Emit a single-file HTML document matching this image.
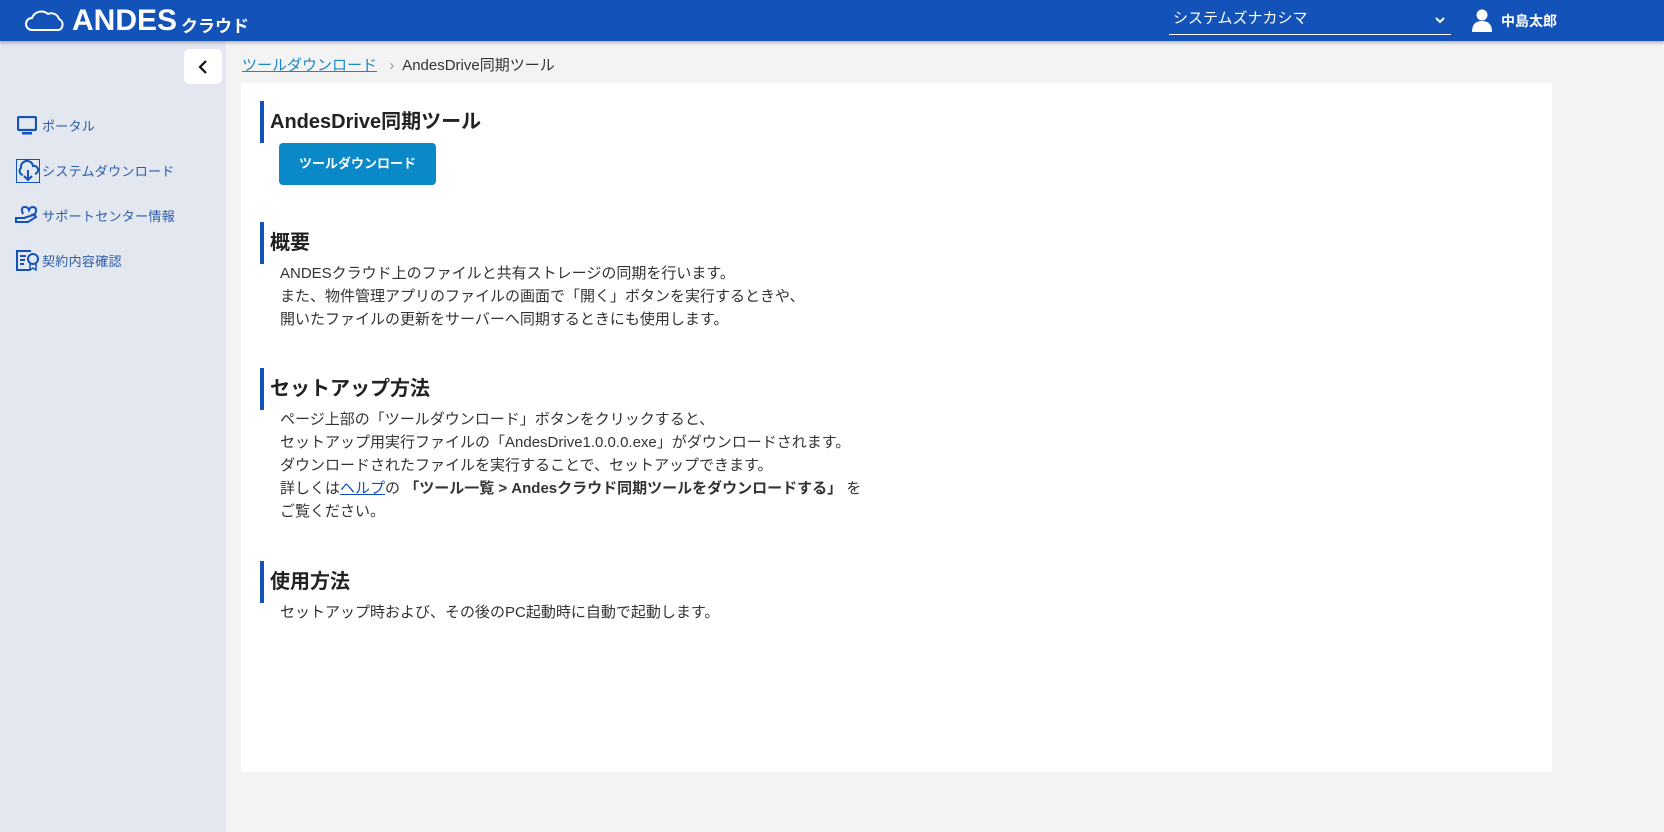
<!DOCTYPE html>
<html><head><meta charset="utf-8"><style>
*{margin:0;padding:0;box-sizing:border-box}
body{width:1664px;height:832px;overflow:hidden;font-family:"Liberation Sans","Noto Sans CJK JP",sans-serif;background:#f3f3f3;position:relative;color:#222}
.hdr{position:absolute;left:0;top:0;width:1664px;height:41px;background:#1352b8;box-shadow:0 2px 3px rgba(0,0,0,.25);z-index:2}
.logo{position:absolute;left:72px;top:4px;color:#fff;font-size:30px;font-weight:bold;letter-spacing:0px}
.logo2{position:absolute;left:181px;top:12px;color:#fff;font-size:17px;font-weight:bold}
.sel{position:absolute;left:1169px;top:8px;width:282px;height:27px;border-bottom:1px solid #fff;color:#fff;font-size:15px;padding-left:4px;line-height:22px}
.user{position:absolute;left:1501px;top:11px;color:#fff;font-size:14px;font-weight:bold}
.side{position:absolute;left:0;top:41px;width:226px;height:791px;background:#e3e7f0}
.tog{position:absolute;left:184px;top:49px;width:38px;height:35px;background:#fff;border-radius:6px}
.nav{position:absolute;left:42px;font-size:13px;color:#2c5ca8;letter-spacing:.3px}
.card{position:absolute;left:241px;top:83px;width:1311px;height:689px;background:#fff}
.bc{position:absolute;left:242px;top:54px;font-size:15px;color:#333}
.bc a{color:#1a86c9;text-decoration:underline}
h2{position:absolute;left:260px;border-left:4px solid #1352b8;padding-left:6px;font-size:20px;font-weight:bold;height:42px;line-height:42px;color:#222}
.p{position:absolute;left:280px;font-size:15px;line-height:23px;color:#333}
.btn{position:absolute;left:279px;top:143px;width:157px;height:42px;background:#0a89c9;border-radius:4px;color:#fff;font-size:13px;font-weight:bold;text-align:center;line-height:42px}
</style></head><body>
<div class="hdr">
<svg style="position:absolute;left:24px;top:8px" width="42" height="24" viewBox="0 0 42 24"><path d="M8 22 H35 A6 6 0 0 0 35 11 A8 8 0 0 0 24 6 A10 10 0 0 0 8 10 A6 6 0 0 0 8 22" fill="none" stroke="#fff" stroke-width="2"/></svg>
<div class="logo">ANDES</div><div class="logo2">クラウド</div>
<div class="sel">システムズナカシマ<svg style="position:absolute;right:6px;top:8px" width="10" height="8" viewBox="0 0 10 8"><path d="M1 2 L5 6 L9 2" stroke="#fff" stroke-width="2" fill="none"/></svg></div>
<svg style="position:absolute;left:1471px;top:9px" width="22" height="23" viewBox="0 0 22 23"><circle cx="11" cy="6" r="5.5" fill="#fff"/><path d="M1 23 Q1 12 11 12 Q21 12 21 23Z" fill="#fff"/></svg>
<div class="user">中島太郎</div>
</div>
<div class="side"></div>
<div class="tog"><svg style="position:absolute;left:14px;top:11px" width="10" height="14" viewBox="0 0 10 14"><path d="M8 1 L2 7 L8 13" stroke="#111" stroke-width="2.2" fill="none"/></svg></div>
<svg style="position:absolute;left:17px;top:116px" width="20" height="19" viewBox="0 0 20 19"><rect x="1" y="1" width="18" height="13" rx="1" fill="none" stroke="#1352b8" stroke-width="2.2"/><rect x="5" y="16" width="10" height="2.5" fill="#1352b8"/></svg>
<div class="nav" style="top:116px">ポータル</div>
<svg style="position:absolute;left:16px;top:159px" width="24" height="24" viewBox="0 0 24 24"><rect x="0.5" y="0.5" width="23" height="23" fill="none" stroke="#1352b8"/><path d="M7 16 A4 4 0 0 1 5 9 A6 6 0 0 1 17 7 A4 4 0 0 1 19 15" fill="none" stroke="#1352b8" stroke-width="2"/><path d="M12 11 V21 M8 17 L12 21 L16 17" fill="none" stroke="#1352b8" stroke-width="2"/></svg>
<div class="nav" style="top:161px">システムダウンロード</div>
<svg style="position:absolute;left:15px;top:205px" width="24" height="20" viewBox="0 0 24 20"><path d="M1 13 H9 L15 11 Q20 9 21 12 L13 17 H1Z" fill="none" stroke="#1352b8" stroke-width="2"/><path d="M8 9 Q5 2 10 2 Q13 2 14 5 Q15 2 18 2 Q23 3 20 9 L16 10" fill="none" stroke="#1352b8" stroke-width="2"/></svg>
<div class="nav" style="top:206px">サポートセンター情報</div>
<svg style="position:absolute;left:16px;top:249px" width="24" height="22" viewBox="0 0 24 22"><path d="M15 2 H1 V21 H14" fill="none" stroke="#1352b8" stroke-width="2"/><path d="M4 7 H10 M4 11 H9 M4 15 H8" stroke="#1352b8" stroke-width="2"/><circle cx="17" cy="10" r="5" fill="none" stroke="#1352b8" stroke-width="2"/><path d="M14 15 V21 L17 19 L20 21 V15" fill="none" stroke="#1352b8" stroke-width="1.5"/></svg>
<div class="nav" style="top:251px">契約内容確認</div>
<div class="bc"><a>ツールダウンロード</a> <span style="color:#999;margin:0 8px">›</span>AndesDrive同期ツール</div>
<div class="card"></div>
<h2 style="top:101px">AndesDrive同期ツール</h2>
<div class="btn">ツールダウンロード</div>
<h2 style="top:222px">概要</h2>
<div class="p" style="top:262px">ANDESクラウド上のファイルと共有ストレージの同期を行います。<br>また、物件管理アプリのファイルの画面で「開く」ボタンを実行するときや、<br>開いたファイルの更新をサーバーへ同期するときにも使用します。</div>
<h2 style="top:368px">セットアップ方法</h2>
<div class="p" style="top:408px">ページ上部の「ツールダウンロード」ボタンをクリックすると、<br>セットアップ用実行ファイルの「AndesDrive1.0.0.0.exe」がダウンロードされます。<br>ダウンロードされたファイルを実行することで、セットアップできます。<br>詳しくは<a style="color:#1352b8;text-decoration:underline">ヘルプ</a>の <b>「ツール一覧 &gt; Andesクラウド同期ツールをダウンロードする」</b> を<br>ご覧ください。</div>
<h2 style="top:561px">使用方法</h2>
<div class="p" style="top:601px">セットアップ時および、その後のPC起動時に自動で起動します。</div>
</body></html>
